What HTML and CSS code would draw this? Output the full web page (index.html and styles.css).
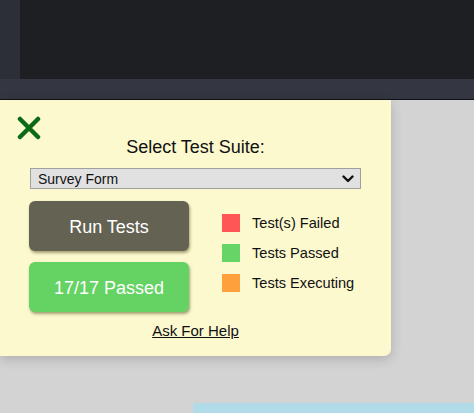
FILE: index.html
```html
<!DOCTYPE html>
<html>
<head>
<meta charset="utf-8">
<link rel="stylesheet" href="styles.css">
</head>
<body>
<div class="top">
  <div class="editor">
    <div class="gutter"></div>
    <div class="code"></div>
  </div>
  <div class="bar"></div>
</div>
<div class="stage">
  <div class="panel">
    <div class="close">
      <svg width="26" height="24" viewBox="0 0 26 24"><path d="M4 3 L22 21 M22 3 L4 21" stroke="#0c6a17" stroke-width="4.5" stroke-linecap="round" fill="none"/></svg>
    </div>
    <div class="title">Select Test Suite:</div>
    <div class="select">
      <span>Survey Form</span>
      <svg width="12" height="8" viewBox="0 0 12 8"><path d="M1.5 1.5 L6 6 L10.5 1.5" stroke="#111" stroke-width="2.4" fill="none" stroke-linecap="round" stroke-linejoin="round"/></svg>
    </div>
    <div class="main">
      <div class="buttons">
        <div class="btn run">Run Tests</div>
        <div class="btn passed">17/17 Passed</div>
      </div>
      <div class="legend">
        <div class="item"><span class="sq red"></span>Test(s) Failed</div>
        <div class="item"><span class="sq green"></span>Tests Passed</div>
        <div class="item"><span class="sq orange"></span>Tests Executing</div>
      </div>
    </div>
    <div class="help"><a>Ask For Help</a></div>
  </div>
  <div class="blue"></div>
</div>
</body>
</html>
```

FILE: styles.css
```css
html, body {
  margin: 0;
  padding: 0;
}
body {
  width: 474px;
  height: 413px;
  overflow: hidden;
  background: #d3d3d3;
  font-family: "Liberation Sans", Arial, sans-serif;
  color: #111;
}
.top {
  display: flex;
  flex-direction: column;
}
.editor {
  display: flex;
  height: 79px;
}
.gutter {
  width: 20px;
  background: #2c2e38;
}
.code {
  flex: 1;
  background: #1e1f23;
}
.bar {
  height: 20px;
  background: #343642;
  border-bottom: 1px solid #111216;
}
.stage {
  position: relative;
  height: 313px;
}
.panel {
  width: 391px;
  height: 256px;
  background: #fcf9cf;
  border-bottom-right-radius: 7px;
  box-shadow: 0 3px 12px rgba(0,0,0,0.18);
  box-sizing: border-box;
  padding-top: 16px;
  display: flex;
  flex-direction: column;
}
.close {
  height: 24px;
  padding-left: 16px;
}
.title {
  text-align: center;
  font-size: 18px;
  margin-top: -4px;
  line-height: 22px;
}
.select {
  margin: 10px 0 0 30px;
  width: 331px;
  height: 21px;
  box-sizing: border-box;
  background: #e1e1e1;
  border: 1px solid #a0a0a0;
  display: flex;
  align-items: center;
  justify-content: space-between;
  padding: 0 6px 0 7px;
  font-size: 14px;
}
.main {
  display: flex;
  margin-top: 12px;
  padding-left: 29px;
}
.buttons {
  display: flex;
  flex-direction: column;
  gap: 11px;
}
.btn {
  width: 160px;
  height: 50px;
  border-radius: 6px;
  color: #fff;
  font-size: 18px;
  padding-top: 2px;
  box-sizing: border-box;
  display: flex;
  align-items: center;
  justify-content: center;
  box-shadow: 1px 2px 3px rgba(60,50,0,0.45);
}
.run {
  background: #646253;
}
.passed {
  background: #65d264;
}
.legend {
  margin-left: 33px;
  padding-top: 12px;
  display: flex;
  flex-direction: column;
  gap: 11px;
}
.item {
  display: flex;
  align-items: center;
  font-size: 14.6px;
  height: 19px;
}
.sq {
  width: 18px;
  height: 18px;
  margin-right: 12px;
}
.red { background: #fe5656; }
.green { background: #66d466; }
.orange { background: #fea03b; }
.help {
  text-align: center;
  margin-top: 10px;
  font-size: 15px;
}
.help a {
  text-decoration: underline;
  color: #111;
}
.blue {
  position: absolute;
  left: 193px;
  right: 0;
  bottom: 0;
  height: 10px;
  background: #b1dbe8;
}
```
